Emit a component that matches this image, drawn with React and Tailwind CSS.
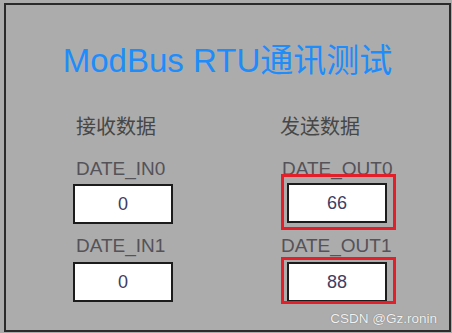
import React from 'react'

const font = { fontFamily: '"Liberation Sans", "Noto Sans CJK SC", sans-serif' }

function ValueBox({ value, mark, className = '' }) {
  return (
    <div className={`relative w-[100px] h-[40px] ${className}`}>
      <div className="w-full h-full bg-white border-2 border-[#1c1c1c] flex items-center justify-center text-[18px] leading-none text-[#3d3d66]">
        {value}
      </div>
      {mark === 'top' && (
        <div className="absolute -left-[6px] -top-[9px] -right-[9px] -bottom-[7px] border-[3px] border-[#e3202a]"></div>
      )}
      {mark === 'bottom' && (
        <div className="absolute -left-[6px] -top-[5px] -right-[9px] -bottom-[2px] border-[3px] border-[#e3202a]"></div>
      )}
    </div>
  )
}

export default function App() {
  return (
    <div className="w-[452px] h-[333px] bg-[#acacac] pl-[4px] pt-[3px] overflow-hidden" style={font}>
      <div className="relative w-[447px] h-[329px] border-2 border-[#2b2b2b] bg-[#acacac]">
        <h1 className="mt-[39px] text-center text-[33px] leading-[33px] text-[#1f8cfb]">
          ModBus RTU通讯测试
        </h1>

        <div className="mt-[40px] ml-[67px] flex">
          <div className="w-[207px] flex flex-col">
            <div className="ml-[3px] text-[20px] leading-[20px] text-[#474747]">接收数据</div>
            <div className="ml-[3px] mt-[22px] text-[19px] leading-[19px] text-[#555258]">DATE_IN0</div>
            <ValueBox value="0" className="mt-[6px]" />
            <div className="ml-[3px] mt-[12px] text-[19px] leading-[19px] text-[#555258]">DATE_IN1</div>
            <ValueBox value="0" className="mt-[7px]" />
          </div>
          <div className="flex flex-col">
            <div className="text-[20px] leading-[20px] text-[#474747]">发送数据</div>
            <div className="ml-[2px] mt-[22px] text-[19px] leading-[19px] text-[#555258]">DATE_OUT0</div>
            <ValueBox value="66" mark="top" className="ml-[7px] mt-[5px]" />
            <div className="ml-[1px] mt-[13px] text-[19px] leading-[19px] text-[#555258]">DATE_OUT1</div>
            <ValueBox value="88" mark="bottom" className="ml-[7px] mt-[7px]" />
          </div>
        </div>

        <div className="absolute right-[12px] bottom-[5px] text-[13.5px] leading-none text-[#f2f2f2] [text-shadow:0_0_1px_rgba(60,60,60,0.6)]">
          CSDN @Gz.ronin
        </div>
      </div>
    </div>
  )
}
